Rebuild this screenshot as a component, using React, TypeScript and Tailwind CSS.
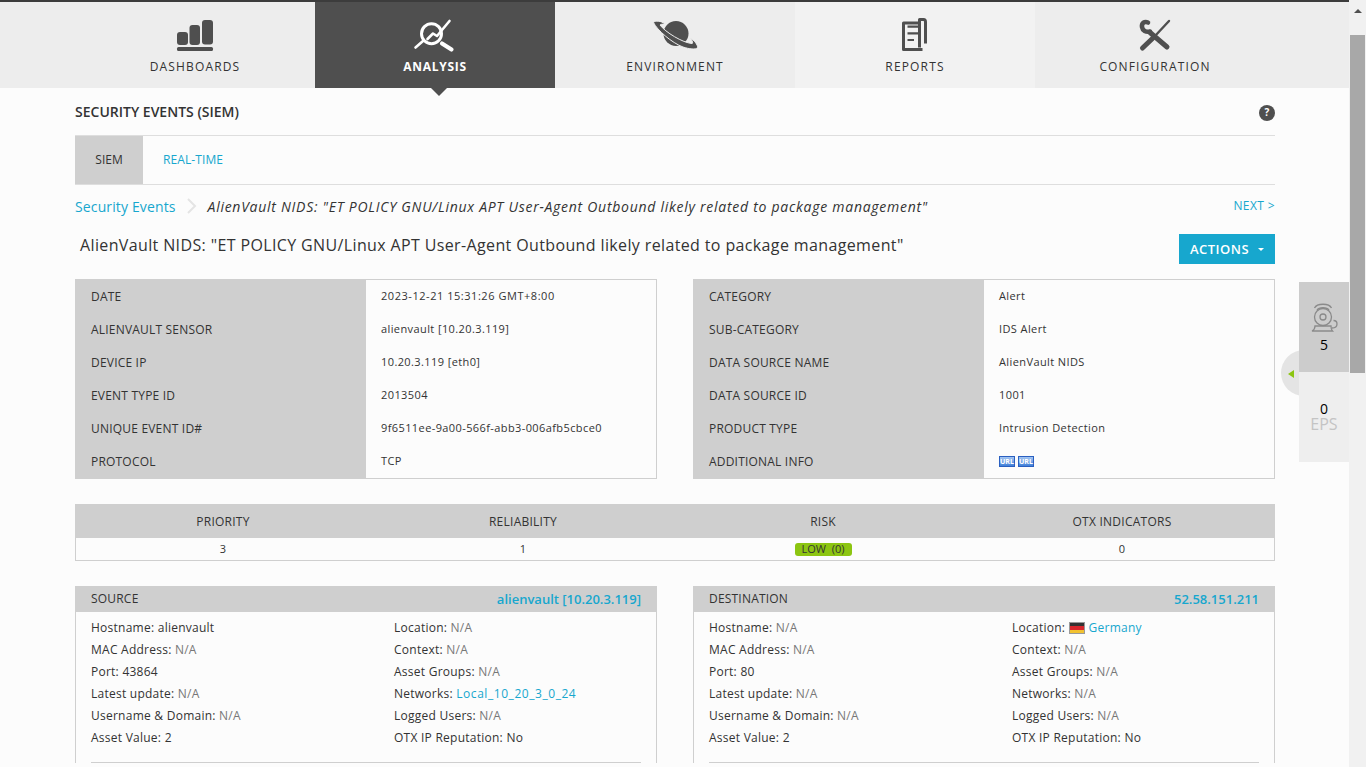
import React from "react";

function Crop({ children }: { children: React.ReactNode }) {
  return <svg width="60" height="44" viewBox="0 0 60 44">{children}</svg>;
}
function IconDash() {
  return (
    <Crop>
      <g fill="#4f4f4f">
        <rect x="12" y="22" width="11" height="13" rx="3" />
        <rect x="24.500" y="15" width="10.500" height="20" rx="3" />
        <rect x="37" y="10" width="11" height="24.500" rx="3" />
        <rect x="12" y="37" width="36" height="4" rx="1.500" />
      </g>
    </Crop>
  );
}
function IconAnalysis() {
  return (
    <Crop>
      <g fill="none" stroke="#fff" strokeLinecap="round" strokeLinejoin="round">
        <circle cx="26.500" cy="23.700" r="10" strokeWidth="3" />
        <path d="M37 33.500L46.500 39.500" strokeWidth="4.200" />
        <path d="M10.500 37.500L18 31" strokeWidth="2.600" />
        <path d="M22.500 29L28 23.500L32 26L44.500 11" strokeWidth="2.600" />
      </g>
    </Crop>
  );
}
function IconPlanet() {
  return (
    <Crop>
      <circle cx="31" cy="23.500" r="12.500" fill="#4f4f4f" />
      <path
        d="M8.500 12.500C10 10.500 16 10.500 20 14C17 14 15 14.500 15 15C20 22 38 33 47 33.500C48.500 33.500 47 30 45.500 28.500C49 30 53 35 52.500 37.500C51 40 44 39 38 37C27 33 12 20 8.500 12.500Z"
        fill="#4f4f4f"
        stroke="#ededed"
        strokeWidth="1"
      />
    </Crop>
  );
}
function IconReports() {
  return (
    <Crop>
      <g fill="none" stroke="#4f4f4f" strokeLinejoin="round">
        <path d="M33.500 13H18.500V39.500H37.500" strokeWidth="3" />
        <path d="M34.500 37.500V9.500H38.500C39.800 9.500 40.500 10.500 40.500 12V33.500" strokeWidth="3" />
        <path d="M22.500 16.700H33M22.500 23.300H33M22.500 30H29" strokeWidth="2.200" />
      </g>
    </Crop>
  );
}
function IconTools() {
  return (
    <Crop>
      <g fill="none" stroke="#4f4f4f" strokeLinecap="round" strokeLinejoin="round">
        <path d="M23 12.500C19.500 11 16.500 13 17 17C17.500 20.500 21 22.500 25 21.500" strokeWidth="4.600" />
        <path d="M25 22.500L42 37" strokeWidth="5" />
        <path d="M44 11L30 26" strokeWidth="2.400" />
        <path d="M28 28L17.500 38" strokeWidth="5" />
      </g>
    </Crop>
  );
}
function IconBell() {
  return (
    <svg width="27" height="30" viewBox="0 0 27 30" fill="none" stroke="#8a8a8a" strokeWidth="1.300">
      <path d="M3.500 6C6 1 18 1 20.500 6M6 8C8 5 16 5 18 8" />
      <circle cx="12" cy="15" r="8.500" />
      <circle cx="12" cy="15" r="3" />
      <path d="M1 29H21.500C20.500 28 20 26 20 24H4C4 26 3 28 1 29ZM21 26C24 26 26 25 26 22C26 20 24.500 18.500 22.500 18.500" />
    </svg>
  );
}

function NavTab({ label, icon, active, light }: { label: string; icon: React.ReactNode; active?: boolean; light?: boolean }) {
  return (
    <div className={`relative flex w-[240px] flex-col items-center pt-[8px] ${active ? "bg-[#4f4f4f] font-bold text-white" : light ? "bg-[#f2f2f2] text-[#333]" : "text-[#333]"}`}>
      {icon}
      <div className={`mt-[5px] text-[12px] leading-[16px] ${active ? "tracking-[0.7px]" : "tracking-[1.15px]"}`}>{label}</div>
      {active && <div className="absolute bottom-[-8px] left-1/2 ml-[-4px] h-0 w-0 border-x-[8px] border-t-[8px] border-x-transparent border-t-[#4f4f4f]" />}
    </div>
  );
}

function InfoTable({ rows, extra }: { rows: [string, string][]; extra?: React.ReactNode }) {
  return (
    <div className="w-[582px] border border-[#cfcfcf]">
      {rows.map(([k, v], i) => (
        <div key={k} className="flex h-[33px] items-center">
          <div className="flex h-full w-[290px] items-center bg-[#cfcfcf] pl-[15px] text-[12px] tracking-[0.2px] text-[#333]">{k}</div>
          <div className={`pl-[15px] text-[11px] text-[#333] ${i === 0 && v.startsWith("2023") ? "tracking-[0.54px]" : "tracking-[0.4px]"}`}>{i === rows.length - 1 && extra ? extra : v}</div>
        </div>
      ))}
    </div>
  );
}

function UrlBadge() {
  return <span className="flex h-[11px] w-[16px] items-center justify-center border border-[#2a5fc0] bg-linear-to-b from-[#a4c6f2] to-[#3f7fd8] text-[7px] font-bold leading-none tracking-normal text-white">URL</span>;
}

const NA = () => <span className="text-[#777]">N/A</span>;
const A = ({ children }: { children: React.ReactNode }) => <span className="text-[#17a7ce]">{children}</span>;

function Host({ title, ip, left, right }: { title: string; ip: string; left: React.ReactNode[]; right: React.ReactNode[] }) {
  return (
    <div className="w-[582px] border border-b-0 border-[#cfcfcf]">
      <div className="flex h-[25px] items-center justify-between bg-[#cfcfcf] px-[15px]">
        <span className="pb-[2px] text-[12px] tracking-[0.2px] text-[#333]">{title}</span>
        <span className="text-[13px] font-semibold text-[#17a7ce]">{ip}</span>
      </div>
      <div className="px-[15px] pt-[5px]">
        <div className="flex text-[12px] tracking-[0.25px] text-[#333]">
          <div className="w-[303px]">{left.map((c, i) => <div key={i} className="flex h-[22px] items-center whitespace-pre">{c}</div>)}</div>
          <div>{right.map((c, i) => <div key={i} className="flex h-[22px] items-center whitespace-pre">{c}</div>)}</div>
        </div>
        <div className="mt-[13px] h-[1px] bg-[#cfcfcf]" />
      </div>
    </div>
  );
}

function Flag() {
  return (
    <span className="mr-[4px] flex h-[12px] w-[16px] flex-col border border-[#999]">
      <span className="flex-1 bg-[#333]" />
      <span className="flex-1 bg-[#d8262c]" />
      <span className="flex-1 bg-[#f2c230]" />
    </span>
  );
}

const TITLE = 'AlienVault NIDS: "ET POLICY GNU/Linux APT User-Agent Outbound likely related to package management"';

export default function App() {
  return (
    <div className="relative flex h-[767px] w-[1366px] overflow-hidden bg-[#fcfcfc] text-[#333]" style={{ fontFamily: '"Open Sans", "Noto Sans", sans-serif' }}>
      <main className="flex w-[1349px] flex-col">
        <div className="h-[2px] bg-[#3c3c3c]" />
        <nav className="flex h-[86px] bg-[#ededed] pl-[75px]">
          <NavTab label="DASHBOARDS" icon={<IconDash />} />
          <NavTab label="ANALYSIS" icon={<IconAnalysis />} active />
          <NavTab label="ENVIRONMENT" icon={<IconPlanet />} />
          <NavTab label="REPORTS" icon={<IconReports />} light />
          <NavTab label="CONFIGURATION" icon={<IconTools />} />
        </nav>
        <div className="ml-[75px] flex w-[1200px] flex-col">
          <div className="flex h-[47px] items-center justify-between">
            <h1 className="text-[14px] font-semibold text-[#333]">SECURITY EVENTS (SIEM)</h1>
            <span className="mt-[2px] flex h-[16px] w-[16px] items-center justify-center rounded-full bg-[#4f4f4f] text-[10px] font-bold text-white">?</span>
          </div>
          <div className="flex h-[50px] border-y border-[#dedede] text-[12px]">
            <div className="flex w-[68px] items-center justify-center bg-[#cfcfcf] text-[#333]">SIEM</div>
            <div className="flex items-center pl-[20px] tracking-[0.1px] text-[#17a7ce]">REAL-TIME</div>
          </div>
          <div className="flex h-[42px] items-center text-[14px]">
            <span className="tracking-[0.13px] text-[#17a7ce]">Security Events</span>
            <svg className="mx-[10px]" width="12" height="16" viewBox="0 0 12 16" fill="none" stroke="#e4e4e4" strokeWidth="2"><path d="M2 1l7 7-7 7" /></svg>
            <i className="tracking-[0.73px] text-[#333]">{TITLE}</i>
            <span className="ml-auto text-[12px] tracking-[0.4px] text-[#17a7ce]">NEXT &gt;</span>
          </div>
          <div className="flex h-[52px] items-start justify-between">
            <h2 className="ml-[5px] mt-[6px] text-[16px] tracking-[0.37px] text-[#333]">{TITLE}</h2>
            <button className="mt-[7px] flex h-[30px] w-[96px] items-center justify-center gap-[9px] bg-[#17a7ce] pt-[1px] text-[13px] font-semibold tracking-[0.5px] text-white">
              ACTIONS
              <span className="h-0 w-0 border-x-[3px] border-t-[3px] border-x-transparent border-t-white" />
            </button>
          </div>
          <div className="flex justify-between">
            <InfoTable rows={[["DATE", "2023-12-21 15:31:26 GMT+8:00"], ["ALIENVAULT SENSOR", "alienvault [10.20.3.119]"], ["DEVICE IP", "10.20.3.119 [eth0]"], ["EVENT TYPE ID", "2013504"], ["UNIQUE EVENT ID#", "9f6511ee-9a00-566f-abb3-006afb5cbce0"], ["PROTOCOL", "TCP"]]} />
            <InfoTable
              rows={[["CATEGORY", "Alert"], ["SUB-CATEGORY", "IDS Alert"], ["DATA SOURCE NAME", "AlienVault NIDS"], ["DATA SOURCE ID", "1001"], ["PRODUCT TYPE", "Intrusion Detection"], ["ADDITIONAL INFO", ""]]}
              extra={<span className="flex gap-[3px]"><UrlBadge /><UrlBadge /></span>}
            />
          </div>
          <div className="mt-[25px] border border-t-0 border-[#cfcfcf]">
            <div className="grid h-[34px] grid-cols-[repeat(3,300px)_298px] items-center bg-[#cfcfcf] pt-[2px] text-center text-[12px] tracking-[0.25px] text-[#333]">
              <div className="pr-[6px]">PRIORITY</div><div className="pr-[6px]">RELIABILITY</div><div className="pr-[6px]">RISK</div><div className="pr-[6px]">OTX INDICATORS</div>
            </div>
            <div className="grid h-[22px] grid-cols-[repeat(3,300px)_298px] items-center text-center text-[11px] text-[#333]">
              <div className="pr-[6px]">3</div><div className="pr-[6px]">1</div>
              <div className="flex justify-center pr-[6px]"><span className="flex h-[13px] w-[57px] items-center justify-center rounded-[3px] bg-[#8cc511] text-[11px]">LOW&nbsp;&nbsp;(0)</span></div>
              <div className="pr-[6px]">0</div>
            </div>
          </div>
          <div className="mt-[25px] flex justify-between">
            <Host
              title="SOURCE"
              ip="alienvault [10.20.3.119]"
              left={[<>Hostname: alienvault</>, <>MAC Address: <NA /></>, <>Port: 43864</>, <>Latest update: <NA /></>, <>Username &amp; Domain: <NA /></>, <>Asset Value: 2</>]}
              right={[<>Location: <NA /></>, <>Context: <NA /></>, <>Asset Groups: <NA /></>, <>Networks: <span className="tracking-[0.55px] text-[#17a7ce]">Local_10_20_3_0_24</span></>, <>Logged Users: <NA /></>, <>OTX IP Reputation: No</>]}
            />
            <Host
              title="DESTINATION"
              ip="52.58.151.211"
              left={[<>Hostname: <NA /></>, <>MAC Address: <NA /></>, <>Port: 80</>, <>Latest update: <NA /></>, <>Username &amp; Domain: <NA /></>, <>Asset Value: 2</>]}
              right={[<>Location: <Flag /><A>Germany</A></>, <>Context: <NA /></>, <>Asset Groups: <NA /></>, <>Networks: <NA /></>, <>Logged Users: <NA /></>, <>OTX IP Reputation: No</>]}
            />
          </div>
        </div>
      </main>
      <aside className="flex w-[17px] flex-col items-center bg-[#f1f1f1]">
        <div className="flex h-[19px] items-center justify-center pt-[2px]"><span className="h-0 w-0 border-x-[4px] border-b-[4px] border-x-transparent border-b-[#505050]" /></div>
        <div className="mt-[16px] h-[338px] w-[15px] bg-[#a8a8a8]" />
      </aside>
      <div className="absolute left-[1281px] top-[350px] h-[46px] w-[46px] rounded-full bg-[#e4e4e4]">
        <span className="absolute left-[7px] top-[20px] h-0 w-0 border-y-[4px] border-r-[6px] border-y-transparent border-r-[#8cc511]" />
      </div>
      <div className="absolute left-[1299px] top-[282px] w-[50px] text-center">
        <div className="flex h-[90px] flex-col items-center bg-[#cccccc] pt-[20px]">
          <IconBell />
          <div className="mt-[3px] text-[14px] leading-[20px] text-black">5</div>
        </div>
        <div className="flex h-[90px] flex-col items-center bg-[#eeeeee] pt-[29px]">
          <div className="text-[14px] leading-[16px] text-black">0</div>
          <div className="text-[16px] leading-[14px] text-[#c4c4c4]">EPS</div>
        </div>
      </div>
    </div>
  );
}
